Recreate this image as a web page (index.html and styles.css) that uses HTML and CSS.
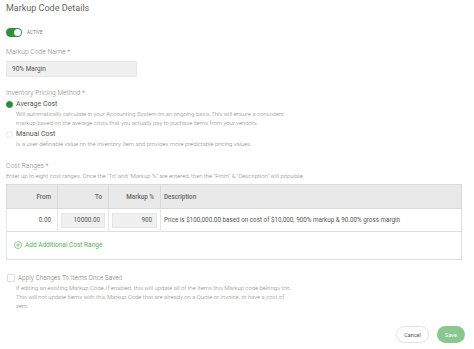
FILE: index.html
```html
<!DOCTYPE html>
<html lang="en">
	<head>
		<meta charset="utf-8">
		<title>Markup Code Details</title>
		<link rel="stylesheet" href="styles.css">
	</head>
	<body>
		<div class="dialog">
			<h2 class="title">Markup Code Details</h2>

			<div class="toggle-row">
				<span class="switch"><span class="knob"></span></span>
				<span class="switch-label">ACTIVE</span>
			</div>

			<label class="label name-label">Markup Code Name *</label>
			<div class="text-input">90% Margin</div>

			<label class="label method-label">Inventory Pricing Method *</label>
			<div class="radio checked">
				<span class="dot"></span>
				<span>Average Cost</span>
			</div>
			<p class="hint">Will automatically calculate in your Accounting System on an ongoing basis.This will ensure a consistent<br>markup based on the average costs that you actually pay to puchase items from your vendors.</p>
			<div class="radio">
				<span class="dot"></span>
				<span>Manual Cost</span>
			</div>
			<p class="hint">Is a user-definable value on the Inventory Item and provides more predictable pricing values.</p>

			<label class="label ranges-label">Cost Ranges *</label>
			<p class="hint">Enter up to eight cost ranges. Once the "To" and "Markup %" are entered, then the "From" &amp; "Description" will populate.</p>

			<table class="ranges">
				<colgroup>
					<col class="col-from">
					<col class="col-to">
					<col class="col-markup">
					<col>
				</colgroup>
				<thead>
					<tr>
						<th class="num">From</th>
						<th class="num">To</th>
						<th class="num">Markup %</th>
						<th class="desc">Description</th>
					</tr>
				</thead>
				<tbody>
					<tr>
						<td class="num">0.00</td>
						<td class="cell-input"><div class="mini-input">10000.00</div></td>
						<td class="cell-input"><div class="mini-input">900</div></td>
						<td class="desc">Price is $100,000.00 based on cost of $10,000, 900% markup &amp; 90.00% gross margin</td>
					</tr>
					<tr class="add-row">
						<td colspan="4">
							<span class="add-link">
								<svg width="8" height="8" viewBox="0 0 16 16"><circle cx="8" cy="8" r="7" fill="none" stroke="currentColor" stroke-width="1.3"/><path d="M8 4.5v7M4.5 8h7" stroke="currentColor" stroke-width="1.3"/></svg>
								Add Additional Cost Range
							</span>
						</td>
					</tr>
				</tbody>
			</table>

			<div class="check-row">
				<span class="box"></span>
				<span>Apply Changes To Items Once Saved</span>
			</div>
			<p class="hint apply-hint">If editing an existing Markup Code, if enabled, this will update all of the Items this Markup code belongs too.<br>This will not update Items with this Markup Code that are already on a Quote or Invoice, or have a cost of<br>zero.</p>

			<div class="actions">
				<button class="btn cancel">Cancel</button>
				<button class="btn save">Save</button>
			</div>
		</div>
	</body>
</html>
```

FILE: styles.css
```css
html
{
	font-family: "Roboto", "Liberation Sans", sans-serif;
	color: #666;
	background: #fff;
}

body
{
	margin: 0;
}

.dialog
{
	padding: 0 12px 0 6px;
	display: flex;
	flex-direction: column;
	align-items: flex-start;
}

.title
{
	font-size: 9px;
	font-weight: normal;
	line-height: 16px;
	margin: 0;
	color: #666;
}

.toggle-row
{
	display: flex;
	align-items: center;
	gap: 5px;
	height: 12px;
	margin-top: 10px;
}

.switch
{
	width: 16px;
	height: 9px;
	border-radius: 5px;
	background: #2f8f3c;
	display: flex;
	justify-content: flex-end;
	align-items: center;
	padding: 0 1px;
	box-sizing: border-box;
}

.knob
{
	width: 7px;
	height: 7px;
	border-radius: 50%;
	background: #fff;
}

.switch-label
{
	font-size: 4.5px;
	color: #777;
	letter-spacing: 0.02em;
}

.label
{
	font-size: 6.8px;
	line-height: 10px;
	color: #888;
	font-weight: 300;
	display: block;
}

.name-label
{
	margin-top: 9px;
}

.text-input
{
	margin-top: 4px;
	width: 131px;
	height: 16px;
	box-sizing: border-box;
	background: #f0f0f0;
	border: 1px solid #e6e6e6;
	border-radius: 1px;
	font-size: 6.5px;
	line-height: 14px;
	padding: 0 5px;
	color: #555;
}

.method-label
{
	margin-top: 11px;
}

.radio
{
	display: flex;
	align-items: center;
	gap: 3px;
	font-size: 7px;
	line-height: 10px;
	color: #555;
	margin-top: 1px;
}

.radio .dot
{
	width: 7px;
	height: 7px;
	border-radius: 50%;
	box-sizing: border-box;
	border: 1px solid #e8e8e8;
	background: #fff;
}

.radio.checked .dot
{
	background: #2a8c38;
	border-color: #2a8c38;
}

.hint
{
	margin: 1px 0 0 10px;
	font-size: 5.9px;
	line-height: 9px;
	color: #888;
	font-weight: 300;
}

.ranges-label
{
	margin-top: 12px;
}

.ranges-label + .hint
{
	margin-left: 0;
}

.ranges
{
	margin-top: 3px;
	width: 456px;
	table-layout: fixed;
	border-collapse: collapse;
	border: 1px solid #ddd;
	font-size: 6.3px;
	color: #555;
}

.col-from,
.col-to
{
	width: 51px;
}

.col-markup
{
	width: 52px;
}

.ranges th
{
	background: #e9e9e9;
	height: 23px;
	padding: 0 6px;
	font-weight: 500;
	color: #666;
	border: 1px solid #dadada;
}

.ranges td
{
	height: 22px;
	padding: 0 6px;
	border-top: 1px solid #ddd;
	border-left: 1px solid #e6e6e6;
}

.ranges .num
{
	text-align: right;
}

.ranges .desc
{
	text-align: left;
	padding-left: 3px;
}

.ranges td.cell-input
{
	padding: 0 3px;
}

.mini-input
{
	height: 15px;
	box-sizing: border-box;
	background: #f0f0f0;
	border: 1px solid #e6e6e6;
	text-align: right;
	line-height: 13px;
	padding: 0 4px;
	color: #555;
}

.add-row td
{
	height: 27px;
	padding-left: 7px;
}

.add-link
{
	display: inline-flex;
	align-items: center;
	gap: 3px;
	color: #55ad5d;
	font-size: 6.5px;
}

.check-row
{
	margin-top: 13px;
	display: flex;
	align-items: center;
	gap: 3px;
	font-size: 6.5px;
	line-height: 10px;
	color: #777;
	font-weight: 300;
}

.check-row .box
{
	width: 6px;
	height: 6px;
	border: 1px solid #ddd;
	border-radius: 1px;
	margin-left: 1px;
}

.apply-hint
{
	margin-top: 1px;
}

.actions
{
	align-self: flex-end;
	display: flex;
	gap: 8px;
	margin-top: 15px;
	margin-right: -3px;
}

.btn
{
	height: 17px;
	border-radius: 9px;
	font-family: "Roboto", "Liberation Sans", sans-serif;
	font-size: 5.5px;
	padding: 0;
	cursor: pointer;
}

.cancel
{
	width: 33px;
	background: #fff;
	border: 1px solid #e2e2e2;
	color: #555;
}

.save
{
	width: 28px;
	background: #8bc68f;
	border: none;
	color: #fff;
}
```
